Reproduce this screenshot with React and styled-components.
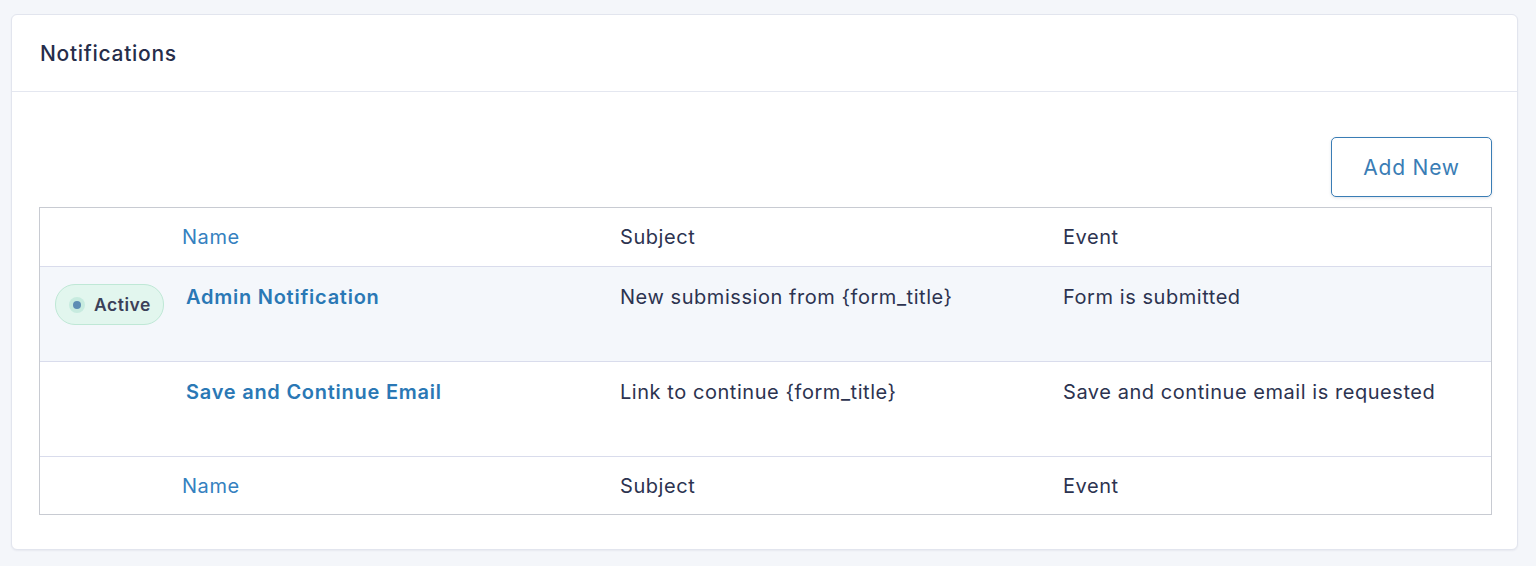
import styled, { createGlobalStyle } from "styled-components";

const GlobalStyle = createGlobalStyle`
  body {
    margin: 0;
    background: #f4f6fa;
    font-family: Inter, "Noto Sans", "Liberation Sans", sans-serif;
    color: #2c3350;
  }
`;

const Page = styled.div`
  padding: 14px 18px 18px 11px;
`;

const Card = styled.div`
  background: #fff;
  border: 1px solid #e2e5ee;
  border-radius: 6px;
  box-shadow: 0 1px 2px rgba(30, 40, 80, 0.06);
`;

const CardHeader = styled.div`
  height: 76px;
  display: flex;
  align-items: center;
  padding: 0 28px;
  border-bottom: 1px solid #e4e7f0;
`;

const Title = styled.h2`
  margin: 0;
  font-size: 21px;
  font-weight: 500;
  letter-spacing: 0.7px;
  color: #262d4a;
`;

const CardBody = styled.div`
  padding: 45px 25px 34px 27px;
  display: flex;
  flex-direction: column;
  gap: 10px;
`;

const Toolbar = styled.div`
  display: flex;
  justify-content: flex-end;
`;

const Button = styled.button`
  width: 161px;
  height: 60px;
  background: #fff;
  border: 1.5px solid #3a7db5;
  border-radius: 5px;
  color: #3a7db5;
  font-family: inherit;
  font-size: 21px;
  letter-spacing: 0.8px;
  box-shadow: 0 1px 3px rgba(40, 60, 100, 0.15);
  cursor: pointer;
`;

const Table = styled.div`
  border: 1.5px solid #c8cbd2;
`;

const Row = styled.div`
  display: grid;
  grid-template-columns: 142px 438px 443px 1fr;
  align-items: ${(p) => (p.$head ? "center" : "start")};
  height: ${(p) => (p.$head ? "58px" : "95px")};
  padding-top: ${(p) => (p.$head ? "0" : "17px")};
  box-sizing: border-box;
  background: ${(p) => (p.$shaded ? "#f4f7fb" : "#fff")};
  border-top: ${(p) => (p.$first ? "none" : "1.5px solid #d9dcec")};
  font-size: 20px;
  letter-spacing: 0.55px;
`;

const HeadCell = styled.div`
  color: ${(p) => (p.$link ? "#3581bf" : "#2c3350")};
`;

const Cell = styled.div`
  color: #2c3350;
  padding-top: 1px;
`;

const NameLink = styled.a`
  color: #2a78b5;
  font-weight: 600;
  letter-spacing: 0.75px;
  padding-left: 4px;
  padding-top: 1px;
  text-decoration: none;
`;

const BadgeCell = styled.div`
  padding-left: 15px;
`;

const Badge = styled.span`
  display: inline-flex;
  align-items: center;
  gap: 13px;
  height: 39px;
  padding: 0 12px 0 17px;
  border-radius: 20px;
  background: #e2f6ee;
  border: 1px solid #bfe8d6;
  font-size: 17.5px;
  font-weight: 600;
  color: #3b4058;
`;

const Dot = styled.span`
  width: 8px;
  height: 8px;
  border-radius: 50%;
  background: #5d8db4;
  box-shadow: 0 0 0 4px #c7ebdf;
`;

const rows = [
  {
    name: "Admin Notification",
    subject: "New submission from {form_title}",
    event: "Form is submitted",
    active: true,
  },
  {
    name: "Save and Continue Email",
    subject: "Link to continue {form_title}",
    event: "Save and continue email is requested",
    active: false,
  },
];

const HeadRow = ({ first }) => (
  <Row $head $first={first}>
    <div />
    <HeadCell $link>Name</HeadCell>
    <HeadCell>Subject</HeadCell>
    <HeadCell>Event</HeadCell>
  </Row>
);

const App = () => {
  return (
    <Page>
      <GlobalStyle />
      <Card>
        <CardHeader>
          <Title>Notifications</Title>
        </CardHeader>
        <CardBody>
          <Toolbar>
            <Button>Add New</Button>
          </Toolbar>
          <Table>
            <HeadRow first />
            {rows.map((r) => (
              <Row key={r.name} $shaded={r.active}>
                <BadgeCell>
                  {r.active && (
                    <Badge>
                      <Dot />
                      Active
                    </Badge>
                  )}
                </BadgeCell>
                <NameLink href="#">{r.name}</NameLink>
                <Cell>{r.subject}</Cell>
                <Cell>{r.event}</Cell>
              </Row>
            ))}
            <HeadRow />
          </Table>
        </CardBody>
      </Card>
    </Page>
  );
};

export default App;
